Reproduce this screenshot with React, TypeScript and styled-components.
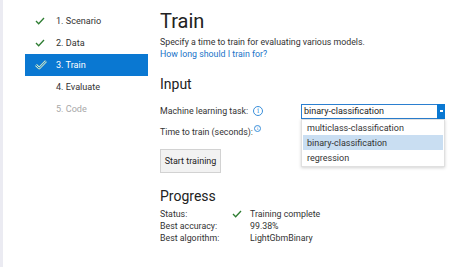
import React from "react";
import styled, { createGlobalStyle } from "styled-components";

const Global = createGlobalStyle`
  html, body { margin: 0; padding: 0; background: #fff; }
  body { font-family: Roboto, "Open Sans", sans-serif; color: #222; }
  * { box-sizing: border-box; }
`;

const Page = styled.div`
  display: flex;
  width: 474px;
  height: 267px;
  overflow: hidden;
`;

const Sidebar = styled.nav`
  width: 148px;
  flex: none;
  border-left: 3px solid #ebebf2;
  padding-top: 10px;
  display: flex;
  flex-direction: column;
`;

const NavItem = styled.div<{ $active?: boolean; $disabled?: boolean }>`
  height: 22px;
  margin-left: 22px;
  display: flex;
  align-items: center;
  padding-left: 10px;
  font-size: 9.1px;
  background: ${(p) => (p.$active ? "#0a78d2" : "transparent")};
  color: ${(p) => (p.$active ? "#fff" : p.$disabled ? "#a8a8a8" : "#333")};
`;

const IconSlot = styled.span`
  width: 21px;
  flex: none;
  display: flex;
  align-items: center;
`;

const Main = styled.main`
  flex: 1;
  padding-left: 12px;
  padding-top: 7px;
  display: flex;
  flex-direction: column;
  align-items: flex-start;
`;

const Title = styled.h1`
  margin: 0;
  font-size: 20px;
  font-weight: 400;
  line-height: 28px;
  color: #222;
`;

const Text = styled.div`
  font-size: 8.8px;
  line-height: 12px;
  color: #333;
`;

const Link = styled.a`
  font-size: 8.8px;
  line-height: 12px;
  color: #1a73c8;
  text-decoration: none;
`;

const Heading = styled.h2<{ $mt: number }>`
  margin: ${(p) => p.$mt}px 0 0;
  font-size: 14px;
  font-weight: 400;
  line-height: 20px;
  color: #222;
`;

const FieldRow = styled.div<{ $mt: number }>`
  display: flex;
  align-items: center;
  margin-top: ${(p) => p.$mt}px;
  position: relative;
  height: 16px;
`;

const Label = styled.span`
  font-size: 8.8px;
  color: #333;
  width: 141px;
  display: flex;
  align-items: center;
  gap: 3px;
`;

const Info = styled.span<{ $small?: boolean; $raise?: boolean }>`
  display: inline-flex;
  align-items: center;
  justify-content: center;
  width: ${(p) => (p.$small ? 7 : 10)}px;
  height: ${(p) => (p.$small ? 7 : 10)}px;
  border: 1px solid #3a8fda;
  border-radius: 50%;
  color: #3a8fda;
  font-size: ${(p) => (p.$small ? 5 : 7)}px;
  line-height: 1;
  font-family: "DejaVu Serif", serif;
  margin-left: ${(p) => (p.$small ? 1 : 2)}px;
  vertical-align: middle;
  transform: translateY(${(p) => (p.$raise ? -4 : 0)}px);
`;

const SelectBox = styled.div`
  width: 144px;
  height: 15px;
  border: 1px solid #2b7fd0;
  display: flex;
  align-items: center;
  font-size: 9px;
  color: #222;
  padding-left: 2px;
  position: relative;
`;

const Arrow = styled.span`
  position: absolute;
  right: -1px;
  top: -1px;
  bottom: -1px;
  width: 8px;
  background: #0a78d2;
  display: flex;
  align-items: center;
  justify-content: center;
  &::after {
    content: "";
    width: 3px;
    height: 2px;
    background: #fff;
  }
`;

const Menu = styled.div`
  position: absolute;
  left: 141px;
  top: 16px;
  width: 144px;
  background: #fff;
  border: 1px solid #e0e0e0;
  box-shadow: 0 1px 3px rgba(0, 0, 0, 0.18);
  padding: 0 1px 1px;
  z-index: 2;
`;

const Option = styled.div<{ $hl?: boolean }>`
  height: 15px;
  display: flex;
  align-items: center;
  padding-left: 4px;
  font-size: 9px;
  color: #333;
  background: ${(p) => (p.$hl ? "#c9def2" : "transparent")};
`;

const Button = styled.button`
  margin-top: 9px;
  width: 61px;
  height: 24px;
  border: 1px solid #d2d2d2;
  background: #f2f2f2;
  font-family: inherit;
  font-size: 9px;
  color: #222;
  padding: 0;
  white-space: nowrap;
`;

const Grid = styled.div`
  display: grid;
  grid-template-columns: 72px 18px auto;
  grid-auto-rows: 12px;
  align-items: center;
  font-size: 8.8px;
  color: #333;
  margin-top: 2px;
`;

const CheckSvg = ({ color = "#2e7d32" }: { color?: string }) => (
  <svg width="10" height="8" viewBox="0 0 11 9">
    <path d="M1 4.6 L4 7.6 L10 1.2" fill="none" stroke={color} strokeWidth="1.5" />
  </svg>
);

const OutlineCheck = () => (
  <svg width="12" height="10" viewBox="0 0 12 10">
    <path d="M1 5 L4.2 8.2 L11 1.2" fill="none" stroke="#cfe8c6" strokeWidth="2.6" strokeLinejoin="round" />
    <path d="M1 5 L4.2 8.2 L11 1.2" fill="none" stroke="#0a78d2" strokeWidth="1" strokeLinejoin="round" />
  </svg>
);

export default function App() {
  return (
    <>
      <Global />
      <Page>
        <Sidebar>
          <NavItem>
            <IconSlot><CheckSvg /></IconSlot>1. Scenario
          </NavItem>
          <NavItem>
            <IconSlot><CheckSvg /></IconSlot>2. Data
          </NavItem>
          <NavItem $active>
            <IconSlot><OutlineCheck /></IconSlot>3. Train
          </NavItem>
          <NavItem>
            <IconSlot />4. Evaluate
          </NavItem>
          <NavItem $disabled>
            <IconSlot />5. Code
          </NavItem>
        </Sidebar>
        <Main>
          <Title>Train</Title>
          <Text style={{ marginTop: 1 }}>Specify a time to train for evaluating various models.</Text>
          <Link href="#">How long should I train for?</Link>
          <Heading $mt={14}>Input</Heading>
          <FieldRow $mt={9}>
            <Label>
              Machine learning task: <Info>i</Info>
            </Label>
            <SelectBox>
              binary-classification
              <Arrow />
            </SelectBox>
            <Menu>
              <Option>multiclass-classification</Option>
              <Option $hl>binary-classification</Option>
              <Option>regression</Option>
            </Menu>
          </FieldRow>
          <FieldRow $mt={5}>
            <Label>
              <span>
                Time to train (seconds):<Info $small $raise>i</Info>
              </span>
            </Label>
          </FieldRow>
          <Button>Start training</Button>
          <Heading $mt={13}>Progress</Heading>
          <Grid>
            <span>Status:</span>
            <CheckSvg />
            <span>Training complete</span>
            <span>Best accuracy:</span>
            <span />
            <span>99.38%</span>
            <span>Best algorithm:</span>
            <span />
            <span>LightGbmBinary</span>
          </Grid>
        </Main>
      </Page>
    </>
  );
}
